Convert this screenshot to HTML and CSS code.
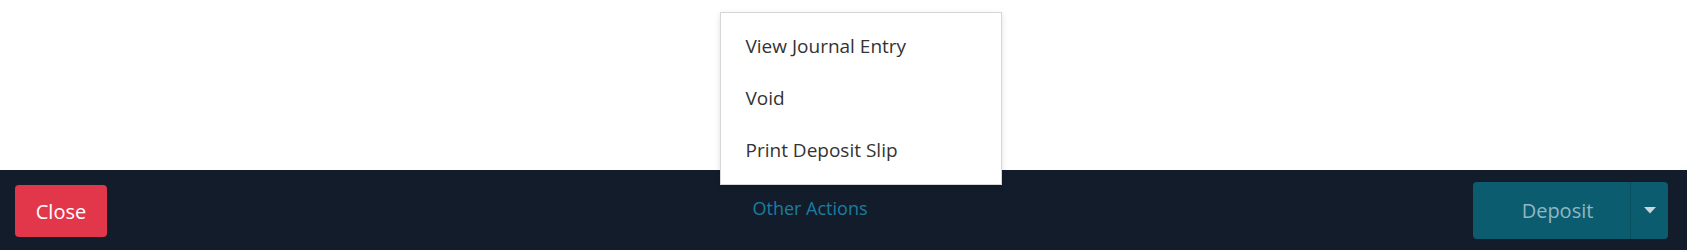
FILE: index.html
```html
<!DOCTYPE html>
<html lang="en">
<head>
    <meta charset="UTF-8">
    <meta name="viewport" content="width=device-width, initial-scale=1.0">
    <title>Deposit</title>
    <link rel="stylesheet" href="styles.css">
</head>
<body>
    <div class="modal-body"></div>

    <div class="modal-footer">
        <div class="footer-left">
            <button class="btn btn-close">Close</button>
        </div>

        <div class="other-actions">
            <button class="btn-link">Other Actions</button>
            <ul class="dropdown-menu">
                <li>View Journal Entry</li>
                <li>Void</li>
                <li>Print Deposit Slip</li>
            </ul>
        </div>

        <div class="footer-right">
            <div class="btn-group">
                <button class="btn btn-deposit" disabled>Deposit</button>
                <button class="btn btn-caret" disabled>
                    <svg width="12" height="7" viewBox="0 0 12 7"><path d="M0 0 L12 0 L6 6.5 Z" fill="#c9d7dc"/></svg>
                </button>
            </div>
        </div>
    </div>
</body>
</html>
```

FILE: styles.css
```css
body {
    margin: 0;
    font-family: 'Open Sans', 'Noto Sans', sans-serif;
    background: #fff;
    overflow: hidden;
}

.modal-body {
    height: 170px;
    background: #fff;
}

.modal-footer {
    height: 80px;
    background: #121c2a;
    display: grid;
    grid-template-columns: 1fr 244px 1fr;
    align-items: center;
    padding: 2px 19px 0 15px;
    box-sizing: border-box;
}

.footer-right {
    display: flex;
    justify-content: flex-end;
}

.btn {
    font-family: inherit;
    font-size: 20px;
    border: none;
    border-radius: 4px;
    cursor: pointer;
}

.btn-close {
    background: #e2374a;
    color: #fff;
    width: 92px;
    height: 52px;
    padding: 0;
}

.other-actions {
    position: relative;
    align-self: stretch;
    display: flex;
    align-items: center;
}

.btn-link {
    background: none;
    border: none;
    font-family: inherit;
    font-size: 18px;
    color: #1b7ea0;
    padding: 0 0 6px 33px;
    white-space: nowrap;
    cursor: pointer;
}

.dropdown-menu {
    position: absolute;
    left: 0;
    top: -160px;
    width: 282px;
    box-sizing: border-box;
    margin: 0;
    padding: 7px 0 8px;
    list-style: none;
    background: #fff;
    border: 1px solid #d6d6d6;
    box-shadow: 0 2px 6px rgba(0, 0, 0, 0.12);
    z-index: 10;
}

.dropdown-menu li {
    height: 52px;
    line-height: 52px;
    padding-left: 25px;
    font-size: 19px;
    color: #333;
}

.btn-group {
    display: flex;
    height: 57px;
    margin-top: -1px;
}

.btn-deposit {
    width: 157px;
    background: #0b5c6f;
    color: #8fb7c3;
    border-radius: 4px 0 0 4px;
    padding: 0 0 0 12px;
}

.btn-caret {
    width: 38px;
    background: #0b5c6f;
    border-left: 1px solid #0a4f60;
    border-radius: 0 4px 4px 0;
    padding: 0;
    display: flex;
    align-items: center;
    justify-content: center;
}
```
